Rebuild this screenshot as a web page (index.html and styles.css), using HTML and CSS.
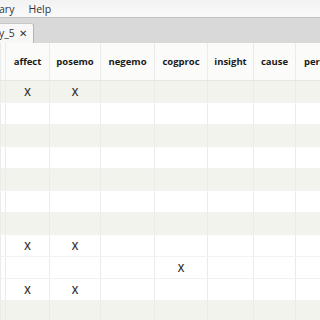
FILE: index.html
```html
<!DOCTYPE html>
<html lang="en">
<head>
    <meta charset="UTF-8">
    <title>Dictionary</title>
    <link rel="stylesheet" href="styles.css">
</head>
<body>

<div class="menu-bar">
    <span class="menu-item">ary</span>
    <span class="menu-item">Help</span>
</div>

<div class="tab-bar">
    <div class="tab">y_5 <span class="tab-close">&#x2715;</span></div>
</div>

<div class="grid-wrap">
    <table class="grid">
        <colgroup>
            <col style="width:5px">
            <col style="width:44px">
            <col style="width:51px">
            <col style="width:54px">
            <col style="width:53px">
            <col style="width:46px">
            <col style="width:42px">
            <col style="width:60px">
        </colgroup>
        <thead>
            <tr>
                <th></th>
                <th>affect</th>
                <th>posemo</th>
                <th>negemo</th>
                <th>cogproc</th>
                <th>insight</th>
                <th>cause</th>
                <th class="cut">per</th>
            </tr>
        </thead>
        <tbody id="rows"></tbody>
    </table>
</div>

<script>
    // which cells are marked, per row: affect, posemo, negemo, cogproc, insight, cause, per
    const rows = [
        [1,1,0,0,0,0,0],
        [0,0,0,0,0,0,0],
        [0,0,0,0,0,0,0],
        [0,0,0,0,0,0,0],
        [0,0,0,0,0,0,0],
        [0,0,0,0,0,0,0],
        [0,0,0,0,0,0,0],
        [1,1,0,0,0,0,0],
        [0,0,0,1,0,0,0],
        [1,1,0,0,0,0,0],
        [0,0,0,0,0,0,0]
    ];
    const plain = [8]; // rows left unshaded out of turn

    const body = document.getElementById("rows");
    rows.forEach((marks, i) => {
        const tr = document.createElement("tr");
        if (i % 2 === 0 && !plain.includes(i)) tr.classList.add("shaded");
        tr.innerHTML = "<td></td>" + marks.map(m => `<td>${m ? "X" : ""}</td>`).join("");
        body.appendChild(tr);
    });
</script>

</body>
</html>
```

FILE: styles.css
```css
body {
    margin: 0;
    width: 320px;
    height: 320px;
    overflow: hidden;
    font-family: "Open Sans", "Noto Sans", sans-serif;
    background: #ffffff;
    color: #222;
}

.menu-bar {
    height: 17px;
    display: flex;
    align-items: center;
    gap: 14px;
    background: linear-gradient(#f2f2f2, #fafafa);
    font-size: 10.5px;
    color: #333;
}
.menu-item:first-child {
    margin-left: -1px;
}

.tab-bar {
    height: 25px;
    border-top: 1px solid #c4c4c4;
    background: #d9d9d9;
    display: flex;
    align-items: flex-end;
}
.tab {
    width: 35px;
    height: 20px;
    box-sizing: border-box;
    background: #f8f8f8;
    border-right: 1px solid #b4b4b4;
    border-top: 1px solid #c8c8c8;
    border-top-right-radius: 3px;
    font-size: 10.5px;
    line-height: 19px;
    white-space: nowrap;
    color: #333;
    margin-left: -1px;
}
.tab-close {
    margin-left: 1px;
    font-size: 10px;
}

.grid-wrap {
    overflow: hidden;
    width: 320px;
}
.grid {
    table-layout: fixed;
    border-collapse: collapse;
    width: 355px;
}
.grid th,
.grid td {
    border-left: 1px solid #ebebeb;
    border-right: 1px solid #ebebeb;
    padding: 0;
    text-align: center;
    white-space: nowrap;
    overflow: hidden;
}
.grid th {
    height: 37px;
    background: #fbfbf9;
    font-size: 9.5px;
    font-weight: bold;
    color: #1a1a1a;
    border-bottom: 1px solid #e6e6e2;
}
.grid th.cut {
    text-align: left;
    padding-left: 8px;
}
.grid td {
    height: 21px;
    font-size: 10.5px;
    font-weight: 600;
    color: #333;
    border-bottom: 1px solid #f2f2f0;
}
.grid tr.shaded td {
    background: #f3f3ee;
}
```
